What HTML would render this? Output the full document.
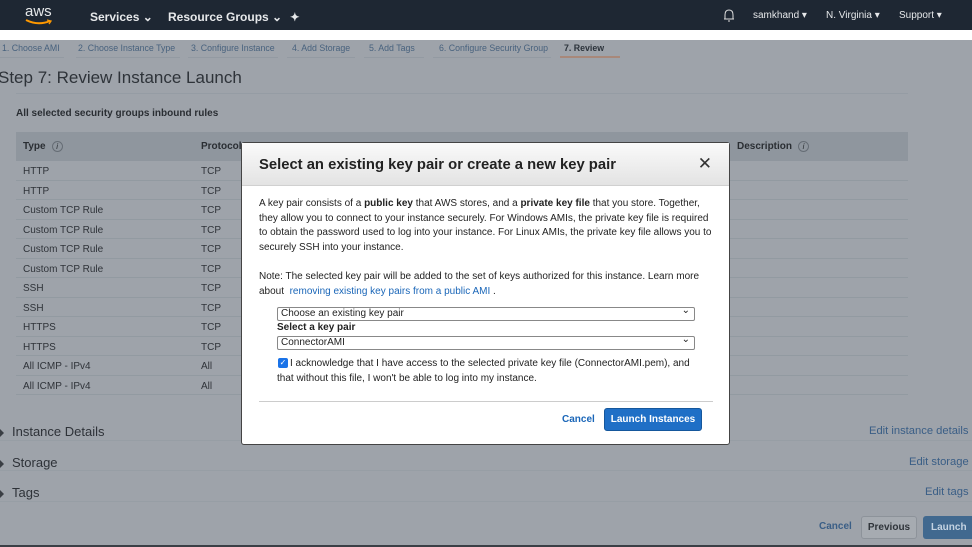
<!DOCTYPE html>
<html><head><style>
*{box-sizing:border-box;margin:0;padding:0}
body{width:972px;height:547px;overflow:hidden;background:#9ea3aa;font-family:"Liberation Sans",sans-serif;position:relative;color:#2a2e33}
.nav{position:absolute;left:0;top:0;width:972px;height:30px;background:#1e2733;color:#e6e8ea;font-size:11.5px;font-weight:bold}
.nav span{position:absolute;top:10px}
.white{position:absolute;top:30px;left:0;width:972px;height:10px;background:#fff}
.tabs{position:absolute;top:40px;left:0;width:972px;height:20px;font-size:8.8px;color:#48627e}
.tabs span{position:absolute;top:3px}
.tabs i{position:absolute;top:17px;height:1px;background:#939aa2}
.abs{position:absolute}
.tbl{position:absolute;left:16px;top:132px;width:892px}
.th{height:29px;background:#8f969e;font-weight:bold;font-size:10px;position:relative}
.row{height:19.5px;border-bottom:1px solid #929aa1;font-size:10px;color:#2f3339;position:relative}
.row span,.th span{position:absolute;top:5px}
.th span{top:9px}
.info{display:inline-block;width:11px;height:11px;border:1px solid #666d75;border-radius:50%;font-size:8px;text-align:center;line-height:9px;font-weight:normal;margin-left:6px;vertical-align:middle}
.sec{position:absolute;left:0;font-size:13px;color:#2e3238}
.sec b{display:inline-block;width:0;height:0;border-left:4px solid #3a3e44;border-top:4px solid transparent;border-bottom:4px solid transparent;margin-right:8px;vertical-align:middle}
.link{position:absolute;font-size:11.2px;color:#3a5e86}
.modal{position:absolute;left:241px;top:142px;width:489px;height:303px;background:#fff;border:1px solid #444;border-radius:3px}
.mh{height:43px;background:linear-gradient(#fafafa,#e3e3e3);border-bottom:1px solid #d0d0d0;position:relative}
.mh h2{position:absolute;left:17px;top:14px;font-size:14.8px;font-weight:bold;color:#222}
.mb{position:absolute;left:17px;top:54px;width:458px;font-size:10px;line-height:14.6px;color:#222}
.sel{position:absolute;left:35px;width:418px;height:14px;border:1px solid #888;border-radius:2px;font-size:10px;padding-left:3px;line-height:12px;color:#222}
.sel:after{content:"⌄";position:absolute;right:4px;top:-3px;font-size:10px}
</style></head><body>
<div class="nav">
<span style="left:25px;top:3px;font-size:15px;font-weight:normal;letter-spacing:0">aws</span>
<svg class="abs" style="left:25px;top:19px" width="28" height="7"><path d="M1 1 Q13 7 25 2" stroke="#f90" stroke-width="2" fill="none"/><path d="M22 1 L26 2 L24 5" stroke="#f90" stroke-width="1.3" fill="none"/></svg>
<span style="left:90px;font-size:12px">Services ⌄</span>
<span style="left:168px;font-size:12px">Resource Groups ⌄</span>
<span style="left:290px">✦</span>
<svg class="abs" style="left:723px;top:9px" width="12" height="13"><path d="M2 10 L2 6 Q2 1 6 1 Q10 1 10 6 L10 10 Z M1 10 L11 10 M5 12 L7 12" stroke="#ddd" fill="none"/></svg>
<span style="left:753px;font-weight:normal;font-size:10px">samkhand ▾</span>
<span style="left:826px;font-weight:normal;font-size:10px">N. Virginia ▾</span>
<span style="left:899px;font-weight:normal;font-size:10px">Support ▾</span>
</div>
<div class="white"></div>
<div class="tabs">
<span style="left:2px">1. Choose AMI</span><i style="left:0;width:64px"></i>
<span style="left:78px">2. Choose Instance Type</span><i style="left:76px;width:104px"></i>
<span style="left:191px">3. Configure Instance</span><i style="left:188px;width:90px"></i>
<span style="left:292px">4. Add Storage</span><i style="left:287px;width:68px"></i>
<span style="left:369px">5. Add Tags</span><i style="left:364px;width:60px"></i>
<span style="left:439px">6. Configure Security Group</span><i style="left:433px;width:118px"></i>
<span style="left:564px;color:#2c333b;font-weight:bold">7. Review</span><i style="left:560px;width:60px;height:2px;top:16px;background:#a8887a"></i>
</div>
<div class="abs" style="left:-2px;top:68px;font-size:17px;color:#2e3339">Step 7: Review Instance Launch</div>
<div class="abs" style="left:16px;top:93px;width:892px;height:1px;background:#959ca4"></div>
<div class="abs" style="left:16px;top:108px;font-size:10px;font-weight:bold">All selected security groups inbound rules</div>
<div class="tbl">
<div class="th"><span style="left:7px">Type<i class="info">i</i></span><span style="left:185px">Protocol</span><span style="left:721px">Description<i class="info">i</i></span></div>
<div class="row"><span style="left:7px">HTTP</span><span style="left:185px">TCP</span></div>
<div class="row"><span style="left:7px">HTTP</span><span style="left:185px">TCP</span></div>
<div class="row"><span style="left:7px">Custom TCP Rule</span><span style="left:185px">TCP</span></div>
<div class="row"><span style="left:7px">Custom TCP Rule</span><span style="left:185px">TCP</span></div>
<div class="row"><span style="left:7px">Custom TCP Rule</span><span style="left:185px">TCP</span></div>
<div class="row"><span style="left:7px">Custom TCP Rule</span><span style="left:185px">TCP</span></div>
<div class="row"><span style="left:7px">SSH</span><span style="left:185px">TCP</span></div>
<div class="row"><span style="left:7px">SSH</span><span style="left:185px">TCP</span></div>
<div class="row"><span style="left:7px">HTTPS</span><span style="left:185px">TCP</span></div>
<div class="row"><span style="left:7px">HTTPS</span><span style="left:185px">TCP</span></div>
<div class="row"><span style="left:7px">All ICMP - IPv4</span><span style="left:185px">All</span></div>
<div class="row"><span style="left:7px">All ICMP - IPv4</span><span style="left:185px">All</span></div>
</div>
<div class="sec" style="top:424px"><b></b>Instance Details</div>
<div class="sec" style="top:455px"><b></b>Storage</div>
<div class="sec" style="top:485px"><b></b>Tags</div>
<div class="abs" style="left:0;top:440px;width:972px;height:1px;background:#979ea5"></div>
<div class="abs" style="left:0;top:470px;width:972px;height:1px;background:#979ea5"></div>
<div class="abs" style="left:0;top:501px;width:972px;height:1px;background:#979ea5"></div>
<div class="link" style="left:869px;top:425px">Edit instance details</div>
<div class="link" style="left:909px;top:456px">Edit storage</div>
<div class="link" style="left:925px;top:486px">Edit tags</div>
<div class="link" style="left:819px;top:521px;font-weight:bold;font-size:10px">Cancel</div>
<div class="abs" style="left:861px;top:516px;width:56px;height:23px;background:#a6abb1;border:1px solid #8d939a;border-radius:3px;font-size:10px;font-weight:bold;text-align:center;line-height:21px;color:#2f343a">Previous</div>
<div class="abs" style="left:923px;top:516px;width:52px;height:23px;background:#41698f;border-radius:3px;font-size:10px;font-weight:bold;line-height:23px;padding-left:8px;color:#c4d3e2">Launch</div>
<div class="abs" style="left:0;top:545px;width:972px;height:2px;background:#3a3f45"></div>
<div class="modal">
<div class="mh"><h2>Select an existing key pair or create a new key pair</h2><span class="abs" style="right:17px;top:11px;font-size:17px;color:#333">✕</span></div>
<div class="mb">A key pair consists of a <b>public key</b> that AWS stores, and a <b>private key file</b> that you store. Together, they allow you to connect to your instance securely. For Windows AMIs, the private key file is required to obtain the password used to log into your instance. For Linux AMIs, the private key file allows you to securely SSH into your instance.<br><br style="line-height:14px">Note: The selected key pair will be added to the set of keys authorized for this instance. Learn more about&nbsp; <span style="color:#1a66b8">removing existing key pairs from a public AMI</span> .</div>
<div class="sel" style="top:164px">Choose an existing key pair</div>
<div class="abs" style="left:35px;top:179px;font-size:10px;font-weight:bold;color:#222">Select a key pair</div>
<div class="sel" style="top:193px">ConnectorAMI</div>
<div class="abs" style="left:36px;top:215px;width:10px;height:10px;background:#1a73e8;border-radius:2px;color:#fff;font-size:8px;text-align:center;line-height:10px">✓</div>
<div class="abs" style="left:35px;top:214px;width:430px;font-size:10px;line-height:14.6px;color:#222;text-indent:13px">I acknowledge that I have access to the selected private key file (ConnectorAMI.pem), and that without this file, I won't be able to log into my instance.</div>
<div class="abs" style="left:17px;top:258px;width:454px;height:1px;background:#ccc"></div>
<div class="abs" style="left:320px;top:271px;font-size:10px;font-weight:bold;color:#1a66b8">Cancel</div>
<div class="abs" style="left:362px;top:265px;width:98px;height:23px;background:#1f6fc6;border:1px solid #15579c;border-radius:3px;color:#fff;font-size:10px;font-weight:bold;text-align:center;line-height:21px">Launch Instances</div>
</div>
</body></html>
